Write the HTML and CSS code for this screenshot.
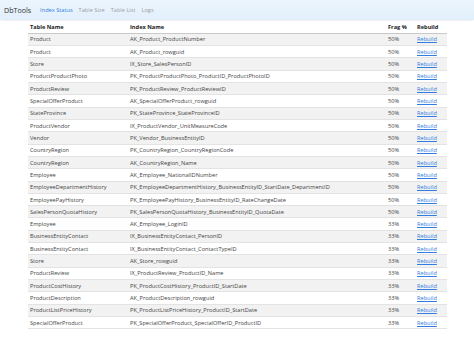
FILE: index.html
```html
<!DOCTYPE html>
<html>
<head>
<meta charset="utf-8">
<link rel="stylesheet" href="styles.css">
</head>
<body>
<nav class="navbar">
  <span class="brand">DbTools</span>
  <a class="nav-link active" href="#">Index Status</a>
  <a class="nav-link" href="#">Table Size</a>
  <a class="nav-link" href="#">Table List</a>
  <a class="nav-link" href="#">Logs</a>
</nav>
<main class="container">
<table class="table">
  <colgroup><col class="c1"><col class="c2"><col class="c3"><col class="c4"></colgroup>
  <thead>
    <tr><th>Table Name</th><th>Index Name</th><th>Frag %</th><th>Rebuild</th></tr>
  </thead>
  <tbody>
    <tr><td>Product</td><td>AK_Product_ProductNumber</td><td>50%</td><td><a href="#">Rebuild</a></td></tr>
    <tr><td>Product</td><td>AK_Product_rowguid</td><td>50%</td><td><a href="#">Rebuild</a></td></tr>
    <tr><td>Store</td><td>IX_Store_SalesPersonID</td><td>50%</td><td><a href="#">Rebuild</a></td></tr>
    <tr><td>ProductProductPhoto</td><td>PK_ProductProductPhoto_ProductID_ProductPhotoID</td><td>50%</td><td><a href="#">Rebuild</a></td></tr>
    <tr><td>ProductReview</td><td>PK_ProductReview_ProductReviewID</td><td>50%</td><td><a href="#">Rebuild</a></td></tr>
    <tr><td>SpecialOfferProduct</td><td>AK_SpecialOfferProduct_rowguid</td><td>50%</td><td><a href="#">Rebuild</a></td></tr>
    <tr><td>StateProvince</td><td>PK_StateProvince_StateProvinceID</td><td>50%</td><td><a href="#">Rebuild</a></td></tr>
    <tr><td>ProductVendor</td><td>IX_ProductVendor_UnitMeasureCode</td><td>50%</td><td><a href="#">Rebuild</a></td></tr>
    <tr><td>Vendor</td><td>PK_Vendor_BusinessEntityID</td><td>50%</td><td><a href="#">Rebuild</a></td></tr>
    <tr><td>CountryRegion</td><td>PK_CountryRegion_CountryRegionCode</td><td>50%</td><td><a href="#">Rebuild</a></td></tr>
    <tr><td>CountryRegion</td><td>AK_CountryRegion_Name</td><td>50%</td><td><a href="#">Rebuild</a></td></tr>
    <tr><td>Employee</td><td>AK_Employee_NationalIDNumber</td><td>50%</td><td><a href="#">Rebuild</a></td></tr>
    <tr><td>EmployeeDepartmentHistory</td><td>PK_EmployeeDepartmentHistory_BusinessEntityID_StartDate_DepartmentID</td><td>50%</td><td><a href="#">Rebuild</a></td></tr>
    <tr><td>EmployeePayHistory</td><td>PK_EmployeePayHistory_BusinessEntityID_RateChangeDate</td><td>50%</td><td><a href="#">Rebuild</a></td></tr>
    <tr><td>SalesPersonQuotaHistory</td><td>PK_SalesPersonQuotaHistory_BusinessEntityID_QuotaDate</td><td>50%</td><td><a href="#">Rebuild</a></td></tr>
    <tr><td>Employee</td><td>AK_Employee_LoginID</td><td>33%</td><td><a href="#">Rebuild</a></td></tr>
    <tr><td>BusinessEntityContact</td><td>IX_BusinessEntityContact_PersonID</td><td>33%</td><td><a href="#">Rebuild</a></td></tr>
    <tr><td>BusinessEntityContact</td><td>IX_BusinessEntityContact_ContactTypeID</td><td>33%</td><td><a href="#">Rebuild</a></td></tr>
    <tr><td>Store</td><td>AK_Store_rowguid</td><td>33%</td><td><a href="#">Rebuild</a></td></tr>
    <tr><td>ProductReview</td><td>IX_ProductReview_ProductID_Name</td><td>33%</td><td><a href="#">Rebuild</a></td></tr>
    <tr><td>ProductCostHistory</td><td>PK_ProductCostHistory_ProductID_StartDate</td><td>33%</td><td><a href="#">Rebuild</a></td></tr>
    <tr><td>ProductDescription</td><td>AK_ProductDescription_rowguid</td><td>33%</td><td><a href="#">Rebuild</a></td></tr>
    <tr><td>ProductListPriceHistory</td><td>PK_ProductListPriceHistory_ProductID_StartDate</td><td>33%</td><td><a href="#">Rebuild</a></td></tr>
    <tr><td>SpecialOfferProduct</td><td>PK_SpecialOfferProduct_SpecialOfferID_ProductID</td><td>33%</td><td><a href="#">Rebuild</a></td></tr>
  </tbody>
</table>
</main>
</body>
</html>
```

FILE: styles.css
```css
html, body {
  margin: 0;
  padding: 0;
  background: #fff;
  font-family: "Open Sans", "Noto Sans", Arial, sans-serif;
  color: #212529;
}

.navbar {
  height: 20px;
  display: flex;
  align-items: center;
  padding: 0 4px;
  background: linear-gradient(#ecf5fd, #e1effb);
  box-shadow: 0 0.5px 1px rgba(0, 0, 0, 0.06);
  box-sizing: border-box;
}

.brand {
  font-size: 7.1px;
  color: #333;
  margin-right: 9px;
}

.nav-link {
  font-size: 5.65px;
  color: #9a9fa4;
  text-decoration: none;
  margin-right: 6px;
}

.nav-link.active {
  color: #2f7de1;
}

.container {
  padding: 0 27px 0 28px;
}

.table {
  width: 100%;
  border-collapse: collapse;
  table-layout: fixed;
  font-size: 5.65px;
}

.c1 { width: 100px; }
.c2 { width: 258px; }
.c3 { width: 29px; }
.c4 { width: 32px; }

.table th,
.table td {
  text-align: left;
  padding: 1.66px 2px;
  line-height: 8px;
  white-space: nowrap;
  overflow: hidden;
  vertical-align: middle;
}

.table th {
  font-weight: bold;
  color: #222;
  padding-top: 2.8px;
  padding-bottom: 2px;
  border-bottom: 1.5px solid #c8c8c8;
}

.table td {
  border-top: 1px solid #e3e3e3;
  color: #444;
}

.table tbody tr:first-child td {
  border-top: none;
}

.table tbody tr:nth-child(odd) {
  background: #f2f2f2;
}

.table tbody tr:last-child td {
  border-bottom: 1px solid #e3e3e3;
}

.table a {
  color: #2f7de1;
  text-decoration: underline;
}
```
